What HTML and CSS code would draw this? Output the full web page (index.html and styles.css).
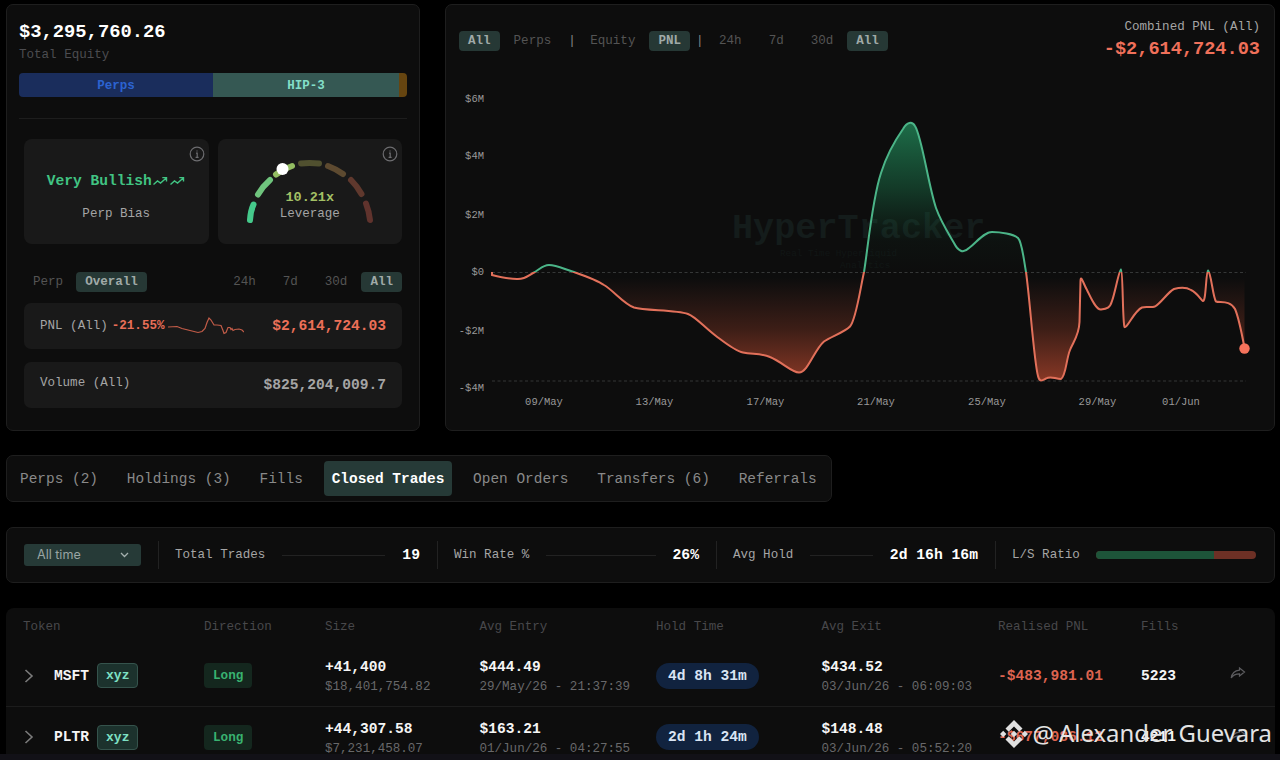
FILE: index.html
```html
<!DOCTYPE html>
<html lang="en">

<head>
  <meta charset="utf-8">
  <meta name="viewport" content="width=device-width">
  <title>HyperTracker</title>
  <link rel="stylesheet" href="styles.css">
</head>

<body>
  <svg class="sprite" width="0" height="0">
    <symbol id="info" viewBox="0 0 16 16">
      <circle cx="8" cy="8" r="6.8" />
      <path d="M7 7.2h1.2v4M6.6 11.4h3M8 4.4v1" />
    </symbol>
    <symbol id="trend" viewBox="0 0 16 12">
      <path d="M1 9.500l4-3.500 3 2L13.500 3.200M9.800 2.600h4.200v4" />
    </symbol>
    <symbol id="chevron" viewBox="0 0 10 14">
      <path d="M1.5 1l6.5 6-6.5 6" />
    </symbol>
    <symbol id="share" viewBox="0 0 16 14">
      <path d="M9.5 2l5 4-5 4V7.8C5.500 7.800 3 9 1.200 12 1.800 8 4.500 4.800 9.500 4.200z" />
    </symbol>
  </svg>

  <main class="page">
    <div class="top">
      <section class="card summary">
        <div class="equity">$3,295,760.26</div>
        <div class="equity-label">Total Equity</div>
        <div class="split">
          <div class="split-perps">Perps</div>
          <div class="split-hip">HIP-3</div>
          <div class="split-rest"></div>
        </div>
        <hr class="rule">

        <div class="tiles">
          <div class="tile">
            <svg class="info"><use href="#info" /></svg>
            <div class="bias">Very Bullish<svg class="trend"><use href="#trend" /></svg><svg class="trend"><use href="#trend" /></svg></div>
            <div class="tile-label">Perp Bias</div>
          </div>
          <div class="tile">
            <svg class="info"><use href="#info" /></svg>
            <svg class="gauge" viewBox="0 0 140 76">
              <path stroke="#45c98b" d="M11 66Q11.500 57 14.500 50.500" />
              <path stroke="#6fc47d" d="M19 40.500Q24 32 31 26" />
              <path stroke="#93bd62" d="M37 20.500Q45 14.500 53 12" />
              <path stroke="#50502f" d="M62 9.500Q70 8.500 80 9.500" />
              <path stroke="#5d4a30" d="M89 12Q97 15 104 20" />
              <path stroke="#5f382d" d="M112 26Q118 32 122.500 40" />
              <path stroke="#60332d" d="M127 49.500Q130 57 131 66" />
              <circle cx="43.500" cy="15" r="6" />
            </svg>
            <div class="leverage">10.21x</div>
            <div class="leverage-label">Leverage</div>
          </div>
        </div>

        <div class="filters">
          <span class="chip">Perp</span>
          <span class="chip active">Overall</span>
          <span class="spacer"></span>
          <span class="chip wide">24h</span>
          <span class="chip wide">7d</span>
          <span class="chip wide">30d</span>
          <span class="chip active">All</span>
        </div>

        <div class="row-box">
          <span>PNL (All)</span>
          <b class="change">-21.55%</b>
          <svg class="spark" viewBox="0 0 76 20">
            <path d="M0 11l9-.5 5 2 8 2 8 2 4-1 3-3 2-6 2-4.500 2 2 3 5 3 0 4 .5 2 5 1 3 2-1 2-5 2 0 1 2 1-1 1 2 2-1 4-.5 3 1 2 2" />
          </svg>
          <b class="row-value red">$2,614,724.03</b>
        </div>
        <div class="row-box volume">
          <span>Volume (All)</span>
          <b class="row-value">$825,204,009.7</b>
        </div>
      </section>

      <section class="card chart">
        <div class="chart-head">
          <div class="chart-filters">
            <span class="chip active">All</span>
            <span class="chip">Perps</span>
            <span class="bar">|</span>
            <span class="chip">Equity</span>
            <span class="chip active">PNL</span>
            <span class="bar second">|</span>
            <span class="chip wide">24h</span>
            <span class="chip wide">7d</span>
            <span class="chip wide">30d</span>
            <span class="chip active">All</span>
          </div>
          <div class="combined">
            <div class="combined-label">Combined PNL (All)</div>
            <div class="combined-value">-$2,614,724.03</div>
          </div>
        </div>

        <svg class="plot" viewBox="446 80 828 340">
          <defs>
            <linearGradient id="area" gradientUnits="userSpaceOnUse" x1="0" y1="123" x2="0" y2="381">
              <stop offset="0" stop-color="#22895a" stop-opacity=".78" />
              <stop offset=".25" stop-color="#1c7a4e" stop-opacity=".42" />
              <stop offset=".46" stop-color="#14613c" stop-opacity=".06" />
              <stop offset=".58" stop-color="#14613c" stop-opacity="0" />
              <stop offset=".6" stop-color="#b04a35" stop-opacity="0" />
              <stop offset=".8" stop-color="#b8492f" stop-opacity=".28" />
              <stop offset="1" stop-color="#b8492f" stop-opacity=".72" />
            </linearGradient>
            <linearGradient id="line" gradientUnits="userSpaceOnUse" x1="0" y1="172" x2="0" y2="372">
              <stop offset=".5" stop-color="#4bb588" />
              <stop offset=".5" stop-color="#e2705a" />
            </linearGradient>
          </defs>
          <g class="watermark">
            <text class="wm-title" x="732" y="237.500">HyperTracker</text>
            <text class="wm-sub" x="780" y="256">Real Time Hyperliquid</text>
            <text class="wm-sub" x="840" y="268">Analytics</text>
          </g>
          <path class="grid" d="M492 272.500H1246M492 381H1246" />
          <path fill="url(#area)" d="M492 272V275C500 277 508 279 517 279C526 279.500 530 274 535 272C540 269 543 265 549 265C557 265 565 269.500 574 272C584 275.500 597 280 604 285C614 291 624 304 634 307.500C645 311 675 309.500 688 314C696 317 704 327 716 336C724 342 735 351 743 352.500C752 354.500 761 353 770 357C782 362 792 372.500 799 372.500C808 372.500 814 350 824 341.500C830 337 845 332 850 326.500C856 320 860 290 864 272C868 248 872 200 881 173C886 157 896 139 903 129C907 122 912 121 915 126C922 137 928 184 936 208C941 222 950 236 954 243C958 251 963 254 969 248C976 243 984 232 992 232C1000 232 1014 234 1018 238C1022 242 1023 255 1026 272C1030 300 1034 362 1038 376C1039.500 383 1043 380 1046 378.500C1051 375.500 1055 379 1061 379C1066 376 1066 360 1070 350C1073 342 1079 336 1079.500 322L1080.500 281C1081 274 1083 283 1087 290C1091 298 1096 310 1101 309.500C1107 309 1110 308 1112 301C1115 293 1119 270 1121 269.500C1123 270 1122.500 322 1124.500 327C1127 329 1134 311 1142 307.500C1147 306 1150 308 1155 306.500C1161 303 1168 292 1174 289C1180 287.500 1186 287 1191 290C1197 292.500 1201 300 1203 301C1206 302 1206 271 1208 270.500C1211 272 1213 298 1216 301.500C1220 303 1230 300 1235 309C1239 318 1243 340 1244.500 348V272Z" />
          <path class="line" d="M492 272V275C500 277 508 279 517 279C526 279.500 530 274 535 272C540 269 543 265 549 265C557 265 565 269.500 574 272C584 275.500 597 280 604 285C614 291 624 304 634 307.500C645 311 675 309.500 688 314C696 317 704 327 716 336C724 342 735 351 743 352.500C752 354.500 761 353 770 357C782 362 792 372.500 799 372.500C808 372.500 814 350 824 341.500C830 337 845 332 850 326.500C856 320 860 290 864 272C868 248 872 200 881 173C886 157 896 139 903 129C907 122 912 121 915 126C922 137 928 184 936 208C941 222 950 236 954 243C958 251 963 254 969 248C976 243 984 232 992 232C1000 232 1014 234 1018 238C1022 242 1023 255 1026 272C1030 300 1034 362 1038 376C1039.500 383 1043 380 1046 378.500C1051 375.500 1055 379 1061 379C1066 376 1066 360 1070 350C1073 342 1079 336 1079.500 322L1080.500 281C1081 274 1083 283 1087 290C1091 298 1096 310 1101 309.500C1107 309 1110 308 1112 301C1115 293 1119 270 1121 269.500C1123 270 1122.500 322 1124.500 327C1127 329 1134 311 1142 307.500C1147 306 1150 308 1155 306.500C1161 303 1168 292 1174 289C1180 287.500 1186 287 1191 290C1197 292.500 1201 300 1203 301C1206 302 1206 271 1208 270.500C1211 272 1213 298 1216 301.500C1220 303 1230 300 1235 309C1239 318 1243 340 1244.500 348" />
          <circle cx="1244.500" cy="348.500" r="5.200" fill="#f5735c" />
          <g class="y-axis">
            <text x="484" y="101.500">$6M</text>
            <text x="484" y="159">$4M</text>
            <text x="484" y="217.500">$2M</text>
            <text x="484" y="275">$0</text>
            <text x="484" y="333.500">-$2M</text>
            <text x="484" y="391">-$4M</text>
          </g>
          <g class="x-axis">
            <text x="544" y="405">09/May</text>
            <text x="654.500" y="405">13/May</text>
            <text x="765.500" y="405">17/May</text>
            <text x="876" y="405">21/May</text>
            <text x="987" y="405">25/May</text>
            <text x="1097.500" y="405">29/May</text>
            <text x="1181" y="405">01/Jun</text>
          </g>
        </svg>
      </section>
    </div>

    <nav class="card tabs">
      <a class="tab">Perps (2)</a>
      <a class="tab">Holdings (3)</a>
      <a class="tab">Fills</a>
      <a class="tab selected">Closed Trades</a>
      <a class="tab">Open Orders</a>
      <a class="tab">Transfers (6)</a>
      <a class="tab">Referrals</a>
    </nav>

    <section class="card stats">
      <div class="select">All time<svg viewBox="0 0 10 6"><path d="M1 1l3.500 3.500L8 1" /></svg></div>
      <div class="stat"><span>Total Trades</span><i></i><b>19</b></div>
      <div class="stat"><span>Win Rate %</span><i></i><b>26%</b></div>
      <div class="stat"><span>Avg Hold</span><i></i><b>2d 16h 16m</b></div>
      <div class="stat"><span>L/S Ratio</span><div class="ratio"><div class="ratio-long"></div></div></div>
    </section>

    <section class="trades">
      <div class="trade head">
        <span>Token</span>
        <span>Direction</span>
        <span>Size</span>
        <span>Avg Entry</span>
        <span>Hold Time</span>
        <span>Avg Exit</span>
        <span>Realised PNL</span>
        <span>Fills</span>
      </div>
      <div class="trade">
        <div class="token"><svg class="chevron"><use href="#chevron" /></svg>MSFT<span class="tag">xyz</span></div>
        <div><span class="long">Long</span></div>
        <div class="double">+41,400<small>$18,401,754.82</small></div>
        <div class="double">$444.49<small>29/May/26 - 21:37:39</small></div>
        <div><span class="hold">4d 8h 31m</span></div>
        <div class="double">$434.52<small>03/Jun/26 - 06:09:03</small></div>
        <div class="loss">-$483,981.01</div>
        <div>5223</div>
        <svg class="share"><use href="#share" /></svg>
      </div>
      <div class="trade">
        <div class="token"><svg class="chevron"><use href="#chevron" /></svg>PLTR<span class="tag">xyz</span></div>
        <div><span class="long">Long</span></div>
        <div class="double">+44,307.58<small>$7,231,458.07</small></div>
        <div class="double">$163.21<small>01/Jun/26 - 04:27:55</small></div>
        <div><span class="hold">2d 1h 24m</span></div>
        <div class="double">$148.48<small>03/Jun/26 - 05:52:20</small></div>
        <div class="loss">-$677,086.12</div>
        <div>4211</div>
        <svg class="share"><use href="#share" /></svg>
      </div>
    </section>
  </main>

  <div class="bottom-edge"></div>
  <div class="credit">
    <svg viewBox="0 0 28 28">
      <path d="M14 0l8.500 8.500-3.200 3.200L14 6.400l-5.300 5.300-3.200-3.200zM14 28l8.500-8.500-3.200-3.200-5.300 5.300-5.300-5.300-3.200 3.200zM3.200 10.800L6.400 14l-3.200 3.200L0 14zM24.800 10.800L28 14l-3.200 3.200-3.200-3.200zM14 10.800l3.200 3.200-3.200 3.200-3.200-3.200z" />
    </svg>
    <span class="at">@</span>
    <span>Alexander Guevara</span>
  </div>
</body>

</html>
```

FILE: styles.css
```css
* {
  box-sizing: border-box;
}

body {
  margin: 0;
  height: 760px;
  overflow: hidden;
  background: #000;
  color: #a5a5a5;
  font-family: "Liberation Mono", monospace;
  font-size: 12.55px;
  line-height: 16px;
}

svg {
  fill: none;
  flex: none;
}

.sprite {
  position: absolute;
}

.page {
  height: 760px;
  overflow: hidden;
  padding: 4px 5px 0 6px;
}

.card {
  background: #0d0d0d;
  border: 1px solid #1e1e1e;
  border-radius: 7px;
}

.top {
  display: flex;
  gap: 25px;
  height: 427px;
}

/* left panel */
.summary {
  width: 414px;
  padding: 15px 12px 0;
}

.equity {
  color: #fff;
  font-size: 18.8px;
  font-weight: bold;
  line-height: 24px;
}

.equity-label {
  margin-top: 3px;
  color: #4c4c50;
}

.split {
  display: flex;
  height: 24px;
  margin-top: 10px;
  border-radius: 4px;
  overflow: hidden;
  line-height: 26px;
  text-align: center;
  font-weight: bold;
}

.split-perps {
  width: 194px;
  background: #1a2d5c;
  color: #2c63d0;
}

.split-hip {
  flex: 1;
  background: #355853;
  color: #83dfc8;
}

.split-rest {
  width: 8px;
  background: #664510;
}

.rule {
  margin: 21px 0 20px;
  border: none;
  border-top: 1px solid #1d1d1d;
}

.tiles {
  display: flex;
  gap: 9px;
  padding: 0 5px;
}

.tile {
  position: relative;
  flex: 1;
  height: 105px;
  background: #191919;
  border-radius: 8px;
  text-align: center;
}

.info {
  position: absolute;
  top: 7px;
  right: 4px;
  width: 16px;
  height: 16px;
  stroke: #6c6c6f;
  stroke-width: 1.2;
}

.bias {
  display: flex;
  justify-content: center;
  align-items: center;
  margin-top: 34px;
  color: #41c483;
  font-size: 14.6px;
  font-weight: bold;
}

.trend {
  width: 17px;
  height: 12px;
  stroke: #41c483;
  stroke-width: 1.4;
}

.tile-label {
  margin-top: 17px;
}

.gauge {
  display: block;
  width: 140px;
  height: 76px;
  margin: 15px 0 0 21px;
  stroke-width: 6;
  stroke-linecap: round;
}

.gauge circle {
  fill: #fff;
}

.leverage {
  margin-top: -40px;
  color: #a3c065;
  font-size: 13.500px;
  font-weight: bold;
}

.filters,
.chart-filters {
  display: flex;
  align-items: center;
}

.filters {
  height: 20px;
  margin: 28px 5px 11px;
}

.spacer {
  flex: 1;
}

.chip {
  padding: 0 9px;
  height: 20px;
  line-height: 20px;
  color: #545454;
}

.chip.wide {
  padding: 0 14px 0 13px;
}

.chip.active {
  background: #263835;
  color: #a0aaa8;
  border-radius: 4px;
  font-weight: bold;
}

.filters .chip:first-child {
  padding-right: 13px;
}

.row-box {
  display: flex;
  align-items: center;
  height: 46px;
  margin: 0 5px 13px;
  padding: 0 16px;
  background: #191919;
  border-radius: 7px;
}

.volume span {
  margin-top: -4px;
}

.change {
  margin-left: 4px;
  color: #e86f58;
}

.spark {
  width: 76px;
  height: 20px;
  margin-left: 4px;
  stroke: #c25c48;
  stroke-width: 1.2;
}

.row-value {
  margin-left: auto;
  font-size: 14.6px;
}

.red {
  color: #ec7058;
}

/* chart */
.chart {
  flex: 1;
}

.chart-head {
  display: flex;
  justify-content: space-between;
  height: 75px;
  padding: 14px 14px 0 13px;
}

.chart-filters {
  height: 44px;
}

.chart .chip:nth-child(2) {
  margin: 0 8px 0 5px;
}

.chart .bar {
  width: 8px;
  color: #858585;
}

.chart .bar + .chip:nth-child(4) {
  margin: 0 5px;
}

.chart .second {
  margin: 0 1px 0 6px;
}

.chart .second + .chip {
  margin-left: 1px;
}

.combined {
  text-align: right;
}

.combined-value {
  margin-top: 3px;
  color: #f0705a;
  font-size: 18.6px;
  font-weight: bold;
  line-height: 24px;
}

.plot {
  display: block;
  width: 828px;
  height: 340px;
}

.plot text {
  font-size: 10.500px;
}

.watermark {
  fill: #141c1b;
}

.plot .wm-title {
  font-size: 35.200px;
  font-weight: bold;
}

.plot .wm-sub {
  fill: #111615;
  font-size: 9.300px;
}

.grid {
  stroke: #353737;
  stroke-dasharray: 3 2.500;
}

.line {
  stroke: url(#line);
  stroke-width: 2;
}

.y-axis,
.x-axis {
  fill: #999;
}

.y-axis {
  text-anchor: end;
}

.x-axis {
  text-anchor: middle;
}

/* tabs */
.tabs {
  display: flex;
  align-items: center;
  gap: 12.800px;
  width: 826px;
  height: 47px;
  margin-top: 24px;
  padding: 0 4px 0 5px;
  color: #898989;
  font-size: 14.450px;
}

.tab {
  padding: 0 8px;
  height: 35px;
  line-height: 37px;
  white-space: nowrap;
}

.selected {
  background: #263a37;
  color: #fff;
  border-radius: 4px;
  font-weight: bold;
}

/* stats */
.stats {
  display: flex;
  align-items: center;
  height: 56px;
  margin-top: 25px;
  padding: 0 18px 0 17px;
}

.select {
  display: flex;
  justify-content: space-between;
  align-items: center;
  width: 117px;
  height: 22px;
  margin-right: 17px;
  padding: 0 11px 0 13px;
  background: #263a37;
  border-radius: 3px;
  color: #9aa5a3;
  font-family: Inter, sans-serif;
}

.select svg {
  width: 10px;
  height: 6px;
  stroke: #a4b0ae;
  stroke-width: 1.3;
}

.stat {
  display: flex;
  align-items: center;
  width: 279px;
  height: 28px;
  padding: 0 17px 0 16px;
  border-left: 1px solid #222;
}

.stat:last-child {
  flex: 1;
  padding-right: 0;
}

.stat i {
  flex: 1;
  height: 1px;
  margin: 0 17px;
  background: #222;
}

.stat b {
  color: #fff;
  font-size: 14.700px;
}

.ratio {
  flex: 1;
  height: 8px;
  margin-left: 16px;
  background: #6d3025;
  border-radius: 4px;
  overflow: hidden;
}

.ratio-long {
  width: 74%;
  height: 8px;
  background: #1d5439;
}

/* closed trades */
.trades {
  margin-top: 25px;
  background: #0d0d0d;
  border-radius: 8px;
}

.trade {
  display: grid;
  grid-template-columns: 181px 121px 154.500px 176.500px 165.500px 176.500px 143px 89px 20px;
  align-items: center;
  height: 61.500px;
  padding-left: 17px;
  border-bottom: 1px solid #1c1c1c;
  color: #f5f5f5;
  font-size: 14.600px;
  font-weight: bold;
  line-height: 20px;
}

.trade.head {
  height: 37.500px;
  border: none;
  color: #48484b;
  font-size: 12.550px;
  font-weight: normal;
}

.double {
  padding-top: 3px;
}

.trade small {
  display: block;
  color: #68686a;
  font-size: 12.550px;
  font-weight: normal;
}

.token {
  display: flex;
  align-items: center;
}

.chevron {
  width: 10px;
  height: 14px;
  margin: 0 20px 0 1px;
  stroke: #7b7b7b;
  stroke-width: 1.6;
}

.tag,
.long {
  display: inline-block;
  height: 25px;
  line-height: 25px;
  border-radius: 4px;
}

.tag {
  margin-left: 8px;
  padding: 0 8px;
  background: #1c322d;
  border: 1px solid #35534c;
  color: #7de0c4;
  font-size: 13px;
  line-height: 23px;
}

.long {
  padding: 0 9px;
  background: #14271e;
  color: #39b270;
  font-size: 12.700px;
}

.hold {
  display: inline-block;
  height: 26px;
  padding: 0 12px;
  background: #11233f;
  border-radius: 13px;
  color: #d9e4f3;
  line-height: 26px;
}

.trade .loss {
  color: #dd6450;
}

.share {
  width: 16px;
  height: 14px;
  margin-top: -5px;
  stroke: #5c5c5f;
  stroke-width: 1.2;
}

.bottom-edge {
  position: absolute;
  left: 0;
  right: 0;
  top: 754px;
  height: 6px;
  background: #121117;
}

.credit {
  position: absolute;
  right: 8px;
  top: 718px;
  display: flex;
  align-items: center;
  color: #e4e4e4;
  font-family: "Noto Sans", sans-serif;
  font-size: 23.900px;
  line-height: 32px;
}

.credit .at {
  margin: 0 5px;
}

.credit span {
  margin-top: -2px;
}

.credit svg {
  width: 28px;
  height: 28px;
  fill: #e0e0e0;
}
```
